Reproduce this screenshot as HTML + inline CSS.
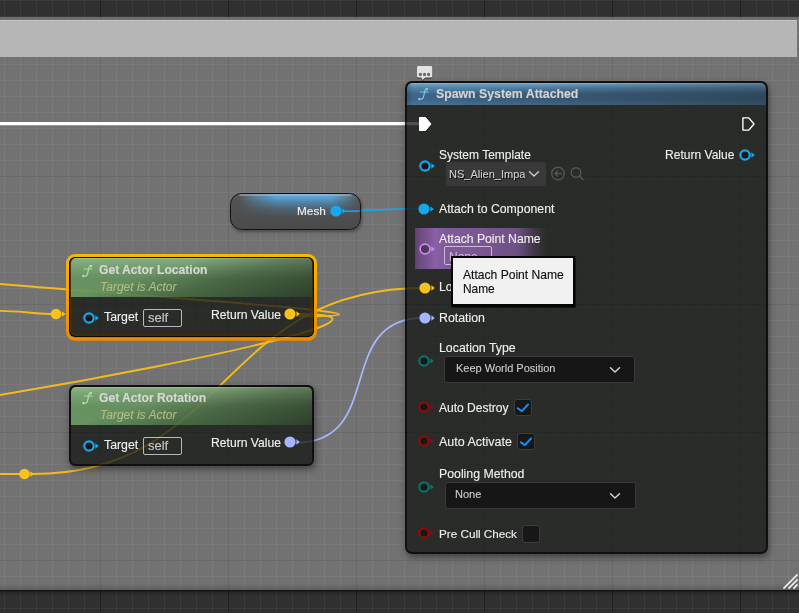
<!DOCTYPE html>
<html><head><meta charset="utf-8">
<style>
*{box-sizing:border-box}
html,body{margin:0;padding:0}
body{width:799px;height:613px;overflow:hidden;position:relative;background:#303030;font-family:"Liberation Sans",sans-serif}
.abs{position:absolute}
.grid{position:absolute;left:0;top:0;width:799px;height:613px;
 background-image:
  linear-gradient(to right,#222 1px,transparent 1px),
  linear-gradient(to bottom,#222 1px,transparent 1px),
  linear-gradient(to right,#3b3b3b 1px,transparent 1px),
  linear-gradient(to bottom,#3b3b3b 1px,transparent 1px);
 background-size:128px 128px,128px 128px,16px 16px,16px 16px;
 background-position:100px 0,0 48px,4px 0,0 0;}
.comment{position:absolute;left:-10px;top:17px;width:816px;height:574px;background:linear-gradient(to bottom,rgba(0,0,0,0.06) 0px,rgba(0,0,0,0) 3px,rgba(0,0,0,0) 566px,rgba(0,0,0,0.18) 573px),rgba(255,255,255,0.32);border-bottom:1px solid #141414;box-shadow:0 2px 3px rgba(0,0,0,0.45)}
.chead{position:absolute;left:-10px;top:20px;width:807px;height:37px;background:#b6b6b6;border-top:1px solid #c4c4c4}
svg.wires{position:absolute;left:0;top:0}
.node{position:absolute;border:2px solid #101010;border-radius:7px;background:linear-gradient(to right,rgba(0,0,0,0.07) 1px,transparent 1px) 13px 13px/16px 16px,linear-gradient(to bottom,rgba(0,0,0,0.07) 1px,transparent 1px) 13px 13px/16px 16px,rgba(31,34,30,0.88);box-shadow:1px 3px 7px rgba(0,0,0,0.45);overflow:hidden}
.title{position:absolute;left:0;top:0;right:0}
.t{position:absolute;white-space:nowrap;will-change:transform;-webkit-text-stroke:0.12px currentColor}
.dd{position:absolute;background:#161616;border:1px solid #3a3a3a;border-radius:3px}
.cb{position:absolute;background:#171717;border:1px solid #3c3c3c;border-radius:3px}
.inbox{position:absolute;border:1px solid #b9b9b9;border-radius:2px}
</style></head><body>
<div class="grid"></div>
<div class="comment"></div>
<div class="chead"></div>

<svg class="wires" width="799" height="613" viewBox="0 0 799 613">
 <g fill="none" stroke-linecap="round">
  <path d="M-5 123.7 L420 123.7" stroke="#ffffff" stroke-width="3.2"/>
  <path d="M336 211.3 C366.5 211.3 394 208.5 424.5 208.5" stroke="#15a8ec" stroke-width="1.7"/>
  <path d="M296 442.8 C386.2 442.8 333.3 317.8 424 317.8" stroke="#a8b8ff" stroke-width="1.7"/>
  <g stroke="#f0bb1c" stroke-width="1.9">
   <path d="M298 316.3 C528 316.3 -295.1 270.4 -61.2 270.4"/>
   <path d="M-20 310.9 L0 310.9 C19.7 310.9 36.3 314 56 314"/>
   <path d="M298 314 C476.8 314 -94.3 417.9 -172.9 417.9"/>
   <path d="M33 474 C228 474 219 288 424 288"/>
   <path d="M-5 474 L20 474"/>
  </g>
 </g>
 <g fill="#f6c21c">
  <circle cx="56" cy="314" r="5.3"/><path d="M61.8 311.2 L65.6 314 L61.8 316.8Z"/>
  <circle cx="24.5" cy="474" r="5.3"/><path d="M30.3 471.2 L34.1 474 L30.3 476.8Z"/>
 </g>
</svg>

<div class="abs" style="left:229.7px;top:193.3px;width:131.3px;height:37px;border-radius:11.5px;border:1.7px solid #121212;overflow:hidden;
 background:linear-gradient(to bottom,#646464 0px,#555 3px,#4f4f4f 50%,#4b4b4b 100%);
 box-shadow:1px 2px 3px rgba(0,0,0,0.35)">
 <div class="abs" style="left:0;right:0;top:0;height:26px;background:linear-gradient(to bottom,rgba(95,175,230,0.6) 0px,rgba(90,170,225,0.95) 3px,rgba(80,150,200,0.75) 8px,rgba(70,130,175,0.35) 15px,rgba(70,130,175,0) 24px);-webkit-mask-image:linear-gradient(to right,transparent 6%,rgba(0,0,0,0.5) 18%,#000 35%,#000 78%,rgba(0,0,0,0.5) 90%,transparent 100%)"></div>
 <div class="abs" style="left:8px;right:8px;top:0;height:2px;background:rgba(255,255,255,0.25);border-radius:10px"></div>
</div>
<div class="t" style="left:296.6px;top:206.21px;font-size:11.8px;line-height:11.8px;color:#f0f0f0;font-weight:normal;font-style:normal;">Mesh</div>
<svg class="abs" style="left:327.6px;top:203.3px" width="18" height="16" viewBox="0 0 18 16"><circle cx="8" cy="8" r="5.6000000000000005" fill="#15a8ec"/><path d="M14.4 5.3 L17.8 8 L14.4 10.7Z" fill="#15a8ec"/></svg>
<svg class="abs" style="left:340px;top:205px" width="25" height="12" viewBox="340 205 25 12"><path d="M345 211.3 C350 211.3 354 211.2 359.5 211" fill="none" stroke="#15a8ec" stroke-width="1.6"/></svg>
<svg class="abs" style="left:60px;top:248px" width="264" height="100" viewBox="60 248 264 100"><defs><linearGradient id="og" x1="0" y1="0" x2="0" y2="1"><stop offset="0" stop-color="#f8b600"/><stop offset="1" stop-color="#ee8a00"/></linearGradient></defs><rect x="67.6" y="255.6" width="247.8" height="83.6" rx="7.5" fill="none" stroke="url(#og)" stroke-width="3.2"/></svg>
<div class="abs" style="left:69.3px;top:257.3px;width:244.4px;height:80.2px;border-radius:6px;background:linear-gradient(to right,rgba(0,0,0,0.07) 1px,transparent 1px) 14.7px 14.7px/16px 16px,linear-gradient(to bottom,rgba(0,0,0,0.07) 1px,transparent 1px) 14.7px 14.7px/16px 16px,rgba(31,34,30,0.88);box-shadow:inset 0 0 0 1px #0c0904,inset 0 0 0 4.2px #3b2b0f"><div class="title" style="left:1.7px;right:1.7px;top:1.2px;height:38.5px;border-radius:5px 5px 0 0;background:linear-gradient(to bottom,rgba(255,255,255,0.07) 0%,rgba(255,255,255,0) 45%),linear-gradient(163deg,rgba(0,0,0,0) 0%,rgba(0,0,0,0.04) 35%,rgba(0,0,0,0.32) 62%,rgba(0,0,0,0.58) 100%),linear-gradient(to bottom,#9acb8e 0px,#80aa77 1.5px,#76a06e 20%,#6a9464 55%,#6b9a65 100%)"></div></div>
<svg class="abs" style="left:80px;top:263.5px" width="14" height="14" viewBox="0 0 14 14"><path d="M11.2 1.9 C10 1.5 9.4 2.2 9.1 3.4 L7.4 10 C6.9 12 5.2 12.9 3.3 12.2 M4.3 5 H12" fill="none" stroke="#a6e29e" stroke-width="1.15" stroke-linecap="round"/><circle cx="10.9" cy="2.1" r="1.3" fill="#a6e29e"/><circle cx="3.3" cy="12" r="1.3" fill="#a6e29e"/></svg>
<div class="t" style="left:99.3px;top:264.05px;font-size:12.1px;line-height:12.1px;color:#d8d8d8;font-weight:bold;font-style:normal;">Get Actor Location</div>
<div class="t" style="left:99.8px;top:280.64px;font-size:12px;line-height:12px;color:#b1bd86;font-weight:normal;font-style:italic;">Target is Actor</div>
<svg class="abs" style="left:80.9px;top:309.5px" width="18" height="16" viewBox="0 0 18 16"><circle cx="8" cy="8" r="4.7" fill="#151819" stroke="#15a8ec" stroke-width="2.2"/><path d="M14.4 5.3 L17.8 8 L14.4 10.7Z" fill="#15a8ec"/></svg>
<div class="t" style="left:104px;top:310.89px;font-size:12.3px;line-height:12.3px;color:#f0f0f0;font-weight:normal;font-style:normal;">Target</div>
<div class="inbox" style="left:143px;top:308.5px;width:39px;height:18px"></div>
<div class="t" style="left:148.4px;top:310.69px;font-size:13px;line-height:13px;color:#c8c8c8;font-weight:normal;font-style:normal;">self</div>
<div class="t" style="left:210.6px;top:308.51px;font-size:12.15px;line-height:12.15px;color:#f0f0f0;font-weight:normal;font-style:normal;">Return Value</div>
<svg class="abs" style="left:282.3px;top:306.3px" width="18" height="16" viewBox="0 0 18 16"><circle cx="8" cy="8" r="5.6000000000000005" fill="#f6c21c"/><path d="M14.4 5.3 L17.8 8 L14.4 10.7Z" fill="#f6c21c"/></svg>
<div class="node" style="left:69px;top:385px;width:245px;height:80.5px;border-radius:6px"><div class="title" style="height:37.7px;border-radius:5px 5px 0 0;background:linear-gradient(to bottom,rgba(255,255,255,0.07) 0%,rgba(255,255,255,0) 45%),linear-gradient(163deg,rgba(0,0,0,0) 0%,rgba(0,0,0,0.04) 35%,rgba(0,0,0,0.32) 62%,rgba(0,0,0,0.58) 100%),linear-gradient(to bottom,#9acb8e 0px,#80aa77 1.5px,#76a06e 20%,#6a9464 55%,#6b9a65 100%)"></div></div>
<svg class="abs" style="left:80px;top:391px" width="14" height="14" viewBox="0 0 14 14"><path d="M11.2 1.9 C10 1.5 9.4 2.2 9.1 3.4 L7.4 10 C6.9 12 5.2 12.9 3.3 12.2 M4.3 5 H12" fill="none" stroke="#a6e29e" stroke-width="1.15" stroke-linecap="round"/><circle cx="10.9" cy="2.1" r="1.3" fill="#a6e29e"/><circle cx="3.3" cy="12" r="1.3" fill="#a6e29e"/></svg>
<div class="t" style="left:99.3px;top:391.65px;font-size:12.1px;line-height:12.1px;color:#d8d8d8;font-weight:bold;font-style:normal;">Get Actor Rotation</div>
<div class="t" style="left:99.8px;top:409.04px;font-size:12px;line-height:12px;color:#b1bd86;font-weight:normal;font-style:italic;">Target is Actor</div>
<svg class="abs" style="left:80.9px;top:437.8px" width="18" height="16" viewBox="0 0 18 16"><circle cx="8" cy="8" r="4.7" fill="#151819" stroke="#15a8ec" stroke-width="2.2"/><path d="M14.4 5.3 L17.8 8 L14.4 10.7Z" fill="#15a8ec"/></svg>
<div class="t" style="left:104px;top:438.59px;font-size:12.3px;line-height:12.3px;color:#f0f0f0;font-weight:normal;font-style:normal;">Target</div>
<div class="inbox" style="left:143px;top:436.5px;width:39px;height:18px"></div>
<div class="t" style="left:148.4px;top:438.69px;font-size:13px;line-height:13px;color:#c8c8c8;font-weight:normal;font-style:normal;">self</div>
<div class="t" style="left:210.6px;top:436.91px;font-size:12.15px;line-height:12.15px;color:#f0f0f0;font-weight:normal;font-style:normal;">Return Value</div>
<svg class="abs" style="left:281.6px;top:434.3px" width="18" height="16" viewBox="0 0 18 16"><circle cx="8" cy="8" r="5.6000000000000005" fill="#a5b5ff"/><path d="M14.4 5.3 L17.8 8 L14.4 10.7Z" fill="#a5b5ff"/></svg>
<svg class="abs" style="left:416px;top:65px" width="18" height="17" viewBox="0 0 18 17">
 <path d="M2.4 1 H14.8 Q16.2 1 16.2 2.4 V11.2 Q16.2 12.6 14.8 12.6 H9.2 L6.6 15 L5.2 12.6 H2.4 Q1 12.6 1 11.2 V2.4 Q1 1 2.4 1Z" fill="#e3e3e3" style="filter:drop-shadow(0.5px 1px 0.6px rgba(0,0,0,0.45))"/>
 <circle cx="4.4" cy="9.4" r="1.6" fill="#5d6b77"/><circle cx="8.5" cy="9.4" r="1.6" fill="#5d6b77"/><circle cx="12.6" cy="9.4" r="1.6" fill="#5d6b77"/>
</svg>
<div class="node" style="left:405px;top:81px;width:363px;height:472.8px"><div class="title" style="height:21.6px;border-radius:5px 5px 0 0;background:linear-gradient(to bottom right,rgba(255,255,255,0.04) 0%,rgba(0,0,0,0) 25%,rgba(30,34,38,0.3) 55%,rgba(30,34,38,0.62) 100%),linear-gradient(to right,rgba(0,0,0,0.18) 0px,rgba(0,0,0,0) 6px),linear-gradient(to bottom,#82b6de 0px,#6598be 1.5px,#5080a4 22%,#3e6787 50%,#44709a 75%,#5a92bc 100%)"></div></div>
<svg class="abs" style="left:416px;top:87px" width="14" height="14" viewBox="0 0 14 14"><path d="M11.2 1.9 C10 1.5 9.4 2.2 9.1 3.4 L7.4 10 C6.9 12 5.2 12.9 3.3 12.2 M4.3 5 H12" fill="none" stroke="#7cc4f2" stroke-width="1.15" stroke-linecap="round"/><circle cx="10.9" cy="2.1" r="1.3" fill="#7cc4f2"/><circle cx="3.3" cy="12" r="1.3" fill="#7cc4f2"/></svg>
<div class="t" style="left:435.5px;top:87.89px;font-size:12.3px;line-height:12.3px;color:#d4d4d4;font-weight:bold;font-style:normal;">Spawn System Attached</div>
<svg class="abs" style="left:418px;top:116px" width="15" height="16" viewBox="0 0 15 16"><path d="M1.5 1.5 H7.5 L13 8 L7.5 14.5 H1.5Z" fill="#fff" stroke="#fff" stroke-width="1" stroke-linejoin="round"/></svg>
<svg class="abs" style="left:741px;top:116px" width="16" height="16" viewBox="0 0 16 16"><path d="M1.9 1.9 H7.8 L13 8 L7.8 14.1 H1.9Z" fill="none" stroke="#fff" stroke-width="1.35" stroke-linejoin="round"/></svg>
<svg class="abs" style="left:416.5px;top:158.2px" width="18" height="16" viewBox="0 0 18 16"><circle cx="8" cy="8" r="4.7" fill="#151819" stroke="#15a8ec" stroke-width="2.2"/><path d="M14.4 5.3 L17.8 8 L14.4 10.7Z" fill="#15a8ec"/></svg>
<div class="t" style="left:439px;top:148.54px;font-size:12px;line-height:12px;color:#efefef;font-weight:normal;font-style:normal;">System Template</div>
<div class="abs" style="left:446px;top:162.3px;width:100px;height:23.3px;background:#393939;border-radius:3px"></div>
<div class="t" style="left:448.7px;top:167.2px;width:75.5px;height:16px;overflow:hidden;font-size:11px;line-height:14px;color:#cdcdcd;text-shadow:1px 1px 0 #0a0a0a">NS_Alien_Impact</div>
<svg class="abs" style="left:528px;top:170px" width="12" height="8" viewBox="0 0 12 8"><path d="M1.5 1.8 L6 6 L10.5 1.8" fill="none" stroke="#c8c8c8" stroke-width="1.5" stroke-linecap="round" stroke-linejoin="round"/></svg>
<svg class="abs" style="left:550px;top:165px" width="36" height="17" viewBox="0 0 36 17"><circle cx="8" cy="8.5" r="6.3" fill="none" stroke="#555" stroke-width="1.4"/><path d="M11.5 8.5 H5 M7.5 6 L5 8.5 L7.5 11" fill="none" stroke="#555" stroke-width="1.4" stroke-linecap="round" stroke-linejoin="round"/><circle cx="26" cy="7.5" r="4.8" fill="none" stroke="#555" stroke-width="1.4"/><path d="M29.5 11 L33 14.5" stroke="#555" stroke-width="1.6" stroke-linecap="round"/></svg>
<div class="t" style="left:664.5px;top:149.29px;font-size:12.06px;line-height:12.06px;color:#efefef;font-weight:normal;font-style:normal;">Return Value</div>
<svg class="abs" style="left:736.5px;top:146.6px" width="18" height="16" viewBox="0 0 18 16"><circle cx="8" cy="8" r="4.7" fill="#151819" stroke="#15a8ec" stroke-width="2.2"/><path d="M14.4 5.3 L17.8 8 L14.4 10.7Z" fill="#15a8ec"/></svg>
<svg class="abs" style="left:416.4px;top:200.6px" width="18" height="16" viewBox="0 0 18 16"><circle cx="8" cy="8" r="5.6000000000000005" fill="#15a8ec"/><path d="M14.4 5.3 L17.8 8 L14.4 10.7Z" fill="#15a8ec"/></svg>
<div class="t" style="left:439px;top:202.99px;font-size:12.29px;line-height:12.29px;color:#efefef;font-weight:normal;font-style:normal;">Attach to Component</div>
<div class="abs" style="left:415px;top:228px;width:131px;height:41px;background:linear-gradient(to right,#5a4469 0%,#6e4c84 4%,#7a5592 10%,#8a5fa6 15%,#80599a 25%,#7d5795 45%,#6f5084 78%,rgba(80,62,92,0.6) 91%,rgba(60,50,66,0) 100%)"></div>
<svg class="abs" style="left:416.6px;top:240.5px" width="18" height="16" viewBox="0 0 18 16"><circle cx="8" cy="8" r="4.9" fill="#4a3a56" stroke="#cf86f6" stroke-width="1.7"/><path d="M14.4 5.3 L17.8 8 L14.4 10.7Z" fill="#cf86f6"/></svg>
<div class="t" style="left:439px;top:232.67px;font-size:12.2px;line-height:12.2px;color:#efefef;font-weight:normal;font-style:normal;">Attach Point Name</div>
<div class="inbox" style="left:444.3px;top:246.3px;width:47.3px;height:19px;border-color:#cdb8d8"></div>
<div class="t" style="left:449px;top:250.84px;font-size:12px;line-height:12px;color:#c9b4d3;font-weight:normal;font-style:normal;">None</div>
<svg class="abs" style="left:416.5px;top:279.5px" width="18" height="16" viewBox="0 0 18 16"><circle cx="8" cy="8" r="5.6000000000000005" fill="#f6c21c"/><path d="M14.4 5.3 L17.8 8 L14.4 10.7Z" fill="#f6c21c"/></svg>
<div class="t" style="left:439px;top:281.47px;font-size:12.2px;line-height:12.2px;color:#efefef;font-weight:normal;font-style:normal;">Location</div>
<svg class="abs" style="left:416.5px;top:309.8px" width="18" height="16" viewBox="0 0 18 16"><circle cx="8" cy="8" r="5.6000000000000005" fill="#a5b5ff"/><path d="M14.4 5.3 L17.8 8 L14.4 10.7Z" fill="#a5b5ff"/></svg>
<div class="t" style="left:439px;top:311.84px;font-size:12.35px;line-height:12.35px;color:#efefef;font-weight:normal;font-style:normal;">Rotation</div>
<svg class="abs" style="left:416px;top:353.4px" width="18" height="16" viewBox="0 0 18 16"><circle cx="8" cy="8" r="4.7" fill="#151819" stroke="#0c716c" stroke-width="2.2"/><path d="M14.4 5.3 L17.8 8 L14.4 10.7Z" fill="#0c716c"/></svg>
<div class="t" style="left:439px;top:342.04px;font-size:12.35px;line-height:12.35px;color:#efefef;font-weight:normal;font-style:normal;">Location Type</div>
<div class="dd" style="left:444.3px;top:355.6px;width:191px;height:27px"></div>
<div class="t" style="left:455.5px;top:362.89px;font-size:11px;line-height:11px;color:#cbcbcb;font-weight:normal;font-style:normal;">Keep World Position</div>
<svg class="abs" style="left:609px;top:366px" width="12" height="8" viewBox="0 0 12 8"><path d="M1.5 1.8 L6 6 L10.5 1.8" fill="none" stroke="#d0d0d0" stroke-width="1.5" stroke-linecap="round" stroke-linejoin="round"/></svg>
<svg class="abs" style="left:416px;top:399.4px" width="18" height="16" viewBox="0 0 18 16"><circle cx="8" cy="8" r="4.7" fill="#151819" stroke="#8e0b0b" stroke-width="2.2"/><path d="M14.4 5.3 L17.8 8 L14.4 10.7Z" fill="#8e0b0b"/></svg>
<div class="t" style="left:439px;top:401.81px;font-size:12.04px;line-height:12.04px;color:#efefef;font-weight:normal;font-style:normal;">Auto Destroy</div>
<div class="cb" style="left:514.3px;top:399.4px;width:17.4px;height:17.1px"></div>
<svg class="abs" style="left:514.3px;top:399.4px" width="17" height="17" viewBox="0 0 17 17"><path d="M3.7 9.2 L7.9 12.1 L14 5.5" fill="none" stroke="#1a8ef2" stroke-width="2" stroke-linecap="round" stroke-linejoin="round"/></svg>
<svg class="abs" style="left:416px;top:433.4px" width="18" height="16" viewBox="0 0 18 16"><circle cx="8" cy="8" r="4.7" fill="#151819" stroke="#8e0b0b" stroke-width="2.2"/><path d="M14.4 5.3 L17.8 8 L14.4 10.7Z" fill="#8e0b0b"/></svg>
<div class="t" style="left:439px;top:435.52px;font-size:12.5px;line-height:12.5px;color:#efefef;font-weight:normal;font-style:normal;">Auto Activate</div>
<div class="cb" style="left:517.3px;top:433.2px;width:17.4px;height:17.2px"></div>
<svg class="abs" style="left:517.3px;top:433.2px" width="17" height="17" viewBox="0 0 17 17"><path d="M3.7 9.2 L7.9 12.1 L14 5.5" fill="none" stroke="#1a8ef2" stroke-width="2" stroke-linecap="round" stroke-linejoin="round"/></svg>
<svg class="abs" style="left:416px;top:479.4px" width="18" height="16" viewBox="0 0 18 16"><circle cx="8" cy="8" r="4.7" fill="#151819" stroke="#0c716c" stroke-width="2.2"/><path d="M14.4 5.3 L17.8 8 L14.4 10.7Z" fill="#0c716c"/></svg>
<div class="t" style="left:439px;top:467.69px;font-size:12.3px;line-height:12.3px;color:#efefef;font-weight:normal;font-style:normal;">Pooling Method</div>
<div class="dd" style="left:444.5px;top:481.5px;width:191px;height:27px"></div>
<div class="t" style="left:455.3px;top:488.99px;font-size:11px;line-height:11px;color:#cbcbcb;font-weight:normal;font-style:normal;">None</div>
<svg class="abs" style="left:609px;top:492px" width="12" height="8" viewBox="0 0 12 8"><path d="M1.5 1.8 L6 6 L10.5 1.8" fill="none" stroke="#d0d0d0" stroke-width="1.5" stroke-linecap="round" stroke-linejoin="round"/></svg>
<svg class="abs" style="left:416px;top:525.3px" width="18" height="16" viewBox="0 0 18 16"><circle cx="8" cy="8" r="4.7" fill="#151819" stroke="#8e0b0b" stroke-width="2.2"/><path d="M14.4 5.3 L17.8 8 L14.4 10.7Z" fill="#8e0b0b"/></svg>
<div class="t" style="left:439px;top:528.09px;font-size:11.7px;line-height:11.7px;color:#efefef;font-weight:normal;font-style:normal;">Pre Cull Check</div>
<div class="cb" style="left:522.2px;top:525.3px;width:17.5px;height:17.3px"></div>
<svg class="wires" style="opacity:0.1" width="799" height="613" viewBox="0 0 799 613">
 <g fill="none" stroke-linecap="round">
  <path d="M-5 123.7 L420 123.7" stroke="#ffffff" stroke-width="3.2"/>
  <path d="M336 211.3 C366.5 211.3 394 208.5 424.5 208.5" stroke="#15a8ec" stroke-width="1.7"/>
  <path d="M296 442.8 C386.2 442.8 333.3 317.8 424 317.8" stroke="#a8b8ff" stroke-width="1.7"/>
  <g stroke="#f0bb1c" stroke-width="1.9">
   <path d="M298 316.3 C528 316.3 -295.1 270.4 -61.2 270.4"/>
   <path d="M-20 310.9 L0 310.9 C19.7 310.9 36.3 314 56 314"/>
   <path d="M298 314 C476.8 314 -94.3 417.9 -172.9 417.9"/>
   <path d="M33 474 C228 474 219 288 424 288"/>
   <path d="M-5 474 L20 474"/>
  </g>
 </g>
 <g fill="#f6c21c">
  <circle cx="56" cy="314" r="5.3"/><path d="M61.8 311.2 L65.6 314 L61.8 316.8Z"/>
  <circle cx="24.5" cy="474" r="5.3"/><path d="M30.3 471.2 L34.1 474 L30.3 476.8Z"/>
 </g>
</svg>

<div class="abs" style="left:450.5px;top:256.3px;width:124.5px;height:50.5px;background:#f1f1f1;border:2.6px solid #060606;border-bottom-width:3px;box-shadow:0 0 1px 0.5px rgba(0,0,0,0.5)"></div>
<div class="t" style="left:462.5px;top:268.85px;font-size:12.1px;line-height:12.1px;color:#111;font-weight:normal;font-style:normal;-webkit-text-stroke:0.15px #111">Attach Point Name</div>
<div class="t" style="left:462.5px;top:283.72px;font-size:11.9px;line-height:11.9px;color:#111;font-weight:normal;font-style:normal;-webkit-text-stroke:0.15px #111">Name</div>
<svg class="abs" style="left:780px;top:572px" width="19" height="19" viewBox="0 0 19 19"><path d="M4 16 L17 3 M9 16 L17 8 M14 16 L17 13" stroke="#f4f4f4" stroke-width="1.6" stroke-linecap="square"/></svg>
</body></html>
